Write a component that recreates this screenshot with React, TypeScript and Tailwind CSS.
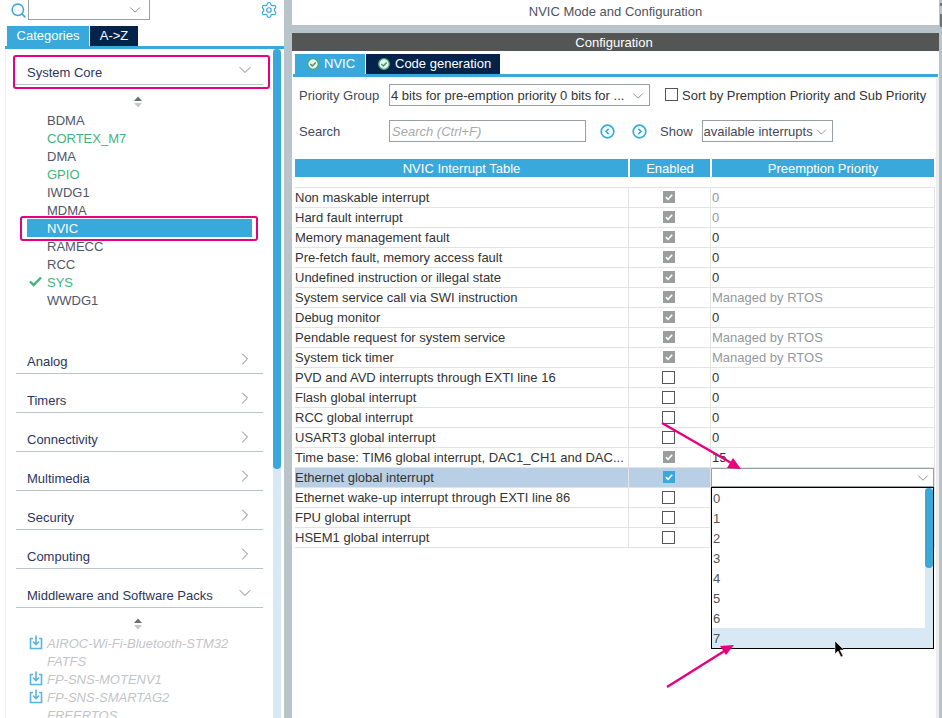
import { ChevronDown, ChevronRight, Search, Settings } from 'lucide-react';

type Box = 'on' | 'off' | 'active';

interface Row {
  name: string;
  box: Box;
  priority: string;
  muted?: boolean;
}

const coreItems = [
  { name: 'BDMA' },
  { name: 'CORTEX_M7', green: true },
  { name: 'DMA' },
  { name: 'GPIO', green: true },
  { name: 'IWDG1' },
  { name: 'MDMA' },
  { name: 'NVIC', selected: true },
  { name: 'RAMECC' },
  { name: 'RCC' },
  { name: 'SYS', green: true, check: true },
  { name: 'WWDG1' },
];

const closedSections = ['Analog', 'Timers', 'Connectivity', 'Multimedia', 'Security', 'Computing'];

const packs = [
  { name: 'AIROC-Wi-Fi-Bluetooth-STM32', icon: true },
  { name: 'FATFS' },
  { name: 'FP-SNS-MOTENV1', icon: true },
  { name: 'FP-SNS-SMARTAG2', icon: true },
  { name: 'FREERTOS' },
];

const rows: Row[] = [
  { name: 'Non maskable interrupt', box: 'on', priority: '0', muted: true },
  { name: 'Hard fault interrupt', box: 'on', priority: '0', muted: true },
  { name: 'Memory management fault', box: 'on', priority: '0' },
  { name: 'Pre-fetch fault, memory access fault', box: 'on', priority: '0' },
  { name: 'Undefined instruction or illegal state', box: 'on', priority: '0' },
  { name: 'System service call via SWI instruction', box: 'on', priority: 'Managed by RTOS', muted: true },
  { name: 'Debug monitor', box: 'on', priority: '0' },
  { name: 'Pendable request for system service', box: 'on', priority: 'Managed by RTOS', muted: true },
  { name: 'System tick timer', box: 'on', priority: 'Managed by RTOS', muted: true },
  { name: 'PVD and AVD interrupts through EXTI line 16', box: 'off', priority: '0' },
  { name: 'Flash global interrupt', box: 'off', priority: '0' },
  { name: 'RCC global interrupt', box: 'off', priority: '0' },
  { name: 'USART3 global interrupt', box: 'off', priority: '0' },
  { name: 'Time base: TIM6 global interrupt, DAC1_CH1 and DAC...', box: 'on', priority: '15' },
  { name: 'Ethernet global interrupt', box: 'active', priority: '' },
  { name: 'Ethernet wake-up interrupt through EXTI line 86', box: 'off', priority: '' },
  { name: 'FPU global interrupt', box: 'off', priority: '' },
  { name: 'HSEM1 global interrupt', box: 'off', priority: '' },
];

function SortHandle() {
  return (
    <svg width="10" height="12" viewBox="0 0 10 12">
      <path d="M5 0.5 L9 5 L1 5 Z" fill="#6b6f72" />
      <path d="M5 11.5 L9 7 L1 7 Z" fill="#c4c8cb" />
    </svg>
  );
}

function PackIcon() {
  return (
    <svg width="14" height="15" viewBox="0 0 14 15" fill="none" stroke="#55b5e4" strokeWidth="1.6">
      <path d="M4 3.5 H1.5 V13.5 H12.5 V3.5 H10" />
      <path d="M7 0.5 V9" />
      <path d="M4 6.5 L7 9.5 L10 6.5" />
    </svg>
  );
}

function TabCheck() {
  return (
    <svg width="12" height="12" viewBox="0 0 12 12">
      <circle cx="6" cy="6" r="5.3" fill="#e8f3ee" stroke="#3fae72" strokeWidth="1.3" />
      <path d="M3.4 6 L5.4 8 L8.7 4.4" fill="none" stroke="#5a8f76" strokeWidth="1.5" />
    </svg>
  );
}

function CircleArrow({ flip }: { flip?: boolean }) {
  return (
    <svg width="15" height="15" viewBox="0 0 15 15" fill="none" stroke="#39a9db">
      <circle cx="7.5" cy="7.5" r="6.3" strokeWidth="1.7" />
      <path d={flip ? 'M6.3 4.8 L9 7.5 L6.3 10.2' : 'M8.7 4.8 L6 7.5 L8.7 10.2'} strokeWidth="1.7" />
    </svg>
  );
}

function CheckBox({ box }: { box: Box }) {
  if (box === 'off') return <span className="block w-[13px] h-[13px] border border-[#555]" />;
  return (
    <span className={`flex items-center justify-center w-[12px] h-[12px] ${box === 'on' ? 'bg-[#9a9c9e]' : 'bg-[#39a9db]'}`}>
      <svg width="10" height="10" viewBox="0 0 10 10" fill="none" stroke="white" strokeWidth="1.6">
        <path d="M1.8 5.2 L4 7.3 L8.2 2.8" />
      </svg>
    </span>
  );
}

function SectionHead({ title, open }: { title: string; open?: boolean }) {
  return (
    <div className="flex items-end justify-between h-[39px] mx-[10px] border-b border-[#b8c3ca] pl-[11px] pr-[8px] pb-[3px] text-[#2c3560]">
      <span className="leading-[16px]">{title}</span>
      {open ? (
        <ChevronDown className="w-[20px] h-[20px] mb-[1px] text-[#777]" strokeWidth={1.1} />
      ) : (
        <ChevronRight className="w-[20px] h-[20px] mb-[1px] text-[#777]" strokeWidth={1.1} />
      )}
    </div>
  );
}

export default function App() {
  return (
    <div className="relative flex w-[942px] h-[718px] overflow-hidden bg-[#b8c3ca] font-['Liberation_Sans',Arial,sans-serif] text-[13px]">
      {/* left panel */}
      <aside className="flex flex-col w-[284px] h-full bg-white">
        <div className="flex items-start justify-between h-[26px] pl-[10px] pr-[6px]">
          <div className="flex items-start">
            <Search className="w-[17px] h-[17px] mt-[2px] text-[#39a9db]" strokeWidth={2.2} />
            <div className="flex items-center justify-end w-[122px] h-[21px] -mt-px ml-px border border-[#9a9fa3] pr-[5px]">
              <ChevronDown className="w-[18px] h-[18px] text-[#777]" strokeWidth={1.1} />
            </div>
          </div>
          <Settings className="w-[18px] h-[18px] mt-[1px] text-[#39a9db]" strokeWidth={1.6} />
        </div>
        <div className="flex h-[20px] pl-[7px] gap-px text-white">
          <div className="flex items-center justify-center w-[82px] bg-[#39a9db]">Categories</div>
          <div className="flex items-center justify-center w-[48px] bg-[#03234b]">A-&gt;Z</div>
        </div>
        <div className="ml-[5px] h-[3px] bg-[#39a9db]" />
        <div className="flex flex-1 min-h-0 ml-[5px] border-l border-[#eeeeee]">
          <div className="w-[267px] -mt-[3px]">
            <SectionHead title="System Core" open />
            <div className="flex justify-center h-[26px] pt-[11px] pr-[3px]">
              <SortHandle />
            </div>
            <ul className="text-[#50566a]">
              {coreItems.map((item) => (
                <li
                  key={item.name}
                  className={`relative flex items-center h-[18px] mx-[21px] pl-[20px] pt-[1px] ${item.green ? 'text-[#3fb47c]' : ''} ${item.selected ? 'bg-[#39a9db] text-white' : ''}`}
                >
                  {item.check && (
                    <svg className="absolute left-[2px] top-[3px]" width="13" height="11" viewBox="0 0 13 11" fill="none" stroke="#3fb47c" strokeWidth="2.4">
                      <path d="M1 5.5 L4.6 9 L12 1.5" />
                    </svg>
                  )}
                  {item.name}
                </li>
              ))}
            </ul>
            <div className="h-[26px]" />
            {closedSections.map((title) => (
              <SectionHead key={title} title={title} />
            ))}
            <SectionHead title="Middleware and Software Packs" open />
            <div className="flex justify-center h-[26px] pt-[10px] pr-[3px]">
              <SortHandle />
            </div>
            <ul className="italic text-[#c2c5c8]">
              {packs.map((p) => (
                <li key={p.name} className="relative flex items-center h-[18px] pl-[41px] pt-[1px] whitespace-nowrap">
                  {p.icon && (
                    <span className="absolute left-[23px] top-[1px]">
                      <PackIcon />
                    </span>
                  )}
                  {p.name}
                </li>
              ))}
            </ul>
          </div>
          <div className="w-[8px] h-full bg-[#d8e8f5]">
            <div className="w-[8px] h-[420px] rounded-full bg-[#39a9db]" />
          </div>
        </div>
      </aside>

      {/* right panel */}
      <main className="flex flex-col w-[647px] h-full ml-[8px] bg-white text-[#44485a]">
        <div className="flex items-center justify-center h-[25px] bg-white pb-[2px] text-[#50525f]">NVIC Mode and Configuration</div>
        <div className="h-[8px] bg-[#b8c3ca]" />
        <div className="flex items-center justify-center h-[18px] pt-[1px] pr-[3px] bg-[#545655] text-white">Configuration</div>
        <div className="flex h-[20px] mt-[3px] ml-[3px] gap-px text-white">
          <div className="flex items-center gap-[5px] w-[70px] pl-[12px] bg-[#39a9db]">
            <TabCheck />
            NVIC
          </div>
          <div className="flex items-center gap-[5px] w-[134px] pl-[12px] bg-[#03234b]">
            <TabCheck />
            Code generation
          </div>
        </div>
        <div className="ml-[1px] mr-px h-[3px] bg-[#39a9db]" />

        <div className="flex-1 min-h-0 border-r-[3px] border-[#eeeeee]">
          <div className="flex items-center h-[22px] mt-[7px] pl-[7px] pt-[1px]">
            <span className="w-[90px]">Priority Group</span>
            <div className="flex items-center justify-between w-[261px] h-[22px] -mt-[1px] border border-[#9a9fa3] pl-[1px] pr-[2px] pt-[1px] text-[#333]">
              <span className="whitespace-nowrap">4 bits for pre-emption priority 0 bits for ...</span>
              <ChevronDown className="w-[18px] h-[18px] text-[#777]" strokeWidth={1.1} />
            </div>
            <span className="w-[13px] h-[13px] ml-[15px] -mt-[2px] border border-[#555]" />
            <span className="ml-[4px] whitespace-nowrap text-[#333]">Sort by Premption Priority and Sub Priority</span>
          </div>
          <div className="flex items-center h-[22px] mt-[14px] pl-[7px] pt-[1px]">
            <span className="w-[90px]">Search</span>
            <div className="flex items-center w-[197px] h-[22px] -mt-[1px] border border-[#9a9fa3] pl-[2px] pt-[1px] italic text-[#aaa]">Search (Ctrl+F)</div>
            <span className="ml-[14px] -mt-[1px]">
              <CircleArrow />
            </span>
            <span className="ml-[17px] -mt-[1px]">
              <CircleArrow flip />
            </span>
            <span className="ml-[13px]">Show</span>
            <div className="flex items-center justify-between w-[131px] h-[22px] -mt-[1px] ml-[9px] border border-[#9a9fa3] pl-[1px] pr-[2px] pt-[1px]">
              <span className="whitespace-nowrap">available interrupts</span>
              <ChevronDown className="w-[18px] h-[18px] text-[#777]" strokeWidth={1.1} />
            </div>
          </div>

          <div className="flex h-[18px] mt-[17px] ml-[3px] gap-[2px] text-white">
            <div className="flex items-center justify-center w-[333px] pt-[1px] bg-[#39a9db]">NVIC Interrupt Table</div>
            <div className="flex items-center justify-center w-[80px] pt-[1px] bg-[#39a9db]">Enabled</div>
            <div className="flex items-center justify-center w-[222px] pt-[1px] bg-[#39a9db]">Preemption Priority</div>
          </div>

          <div className="mt-[10px] ml-[3px] w-[640px] border-b border-[#e3e3e3] text-[#333]">
            {rows.map((row) => (
              <div
                key={row.name}
                className={`flex h-[20px] border-t border-[#e3e3e3] ${row.box === 'active' ? 'bg-[#b8cfe6]' : ''}`}
              >
                <div className="flex items-center w-[333px] whitespace-nowrap">{row.name}</div>
                <div className="flex items-center justify-center w-[82px] border-l border-[#e3e3e3] pr-[2px] pb-[1px]">
                  <CheckBox box={row.box} />
                </div>
                <div className={`flex items-center flex-1 pl-[1px] border-x border-[#e3e3e3] ${row.muted ? 'text-[#94989c]' : ''}`}>
                  {row.box === 'active' ? (
                    <div className="flex items-center justify-end w-[223px] h-[19px] -ml-[1px] border border-[#9a9fa3] bg-white pr-[1px]">
                      <ChevronDown className="w-[18px] h-[18px] text-[#777]" strokeWidth={1.1} />
                    </div>
                  ) : (
                    row.priority
                  )}
                </div>
              </div>
            ))}
          </div>
        </div>
      </main>

      {/* sash grip on the far right */}
      <div className="flex flex-col items-end w-[3px] pt-[3px]">
        <div className="w-[2px] h-[3px] bg-[#6d7478]" />
        <div className="w-[2px] h-[13px] mt-[8px] bg-[#6d7478]" />
      </div>

      {/* open priority dropdown */}
      <div className="absolute left-[711px] top-[487px] flex w-[223px] h-[162px] border border-black bg-white text-[#555]">
        <div className="flex-1 pl-[1px]">
          {['0', '1', '2', '3', '4', '5', '6'].map((n) => (
            <div key={n} className="flex items-center h-[20px] pt-[1px]">{n}</div>
          ))}
        </div>
        <div className="w-[8px] h-[140px] bg-[#d8e8f5]">
          <div className="w-[8px] h-[80px] rounded-full bg-[#39a9db]" />
        </div>
        <div className="absolute left-0 right-0 bottom-0 flex items-center h-[20px] pl-[1px] pt-[1px] bg-[#d8e8f5]">7</div>
      </div>

      {/* annotations */}
      <div className="absolute left-[13px] top-[55px] w-[257px] h-[34px] rounded-[3px] border-2 border-[#e6007e]" />
      <div className="absolute left-[20px] top-[216px] w-[238px] h-[25px] rounded-[3px] border-2 border-[#e6007e]" />
      <svg className="absolute left-0 top-0 pointer-events-none" width="942" height="718">
        <path d="M662 423 L733 464" stroke="#e6007e" strokeWidth="2.4" />
        <path d="M741 469 L727 468 L733 458 Z" fill="#e6007e" />
        <path d="M667 687 L726 650" stroke="#e6007e" strokeWidth="2.4" />
        <path d="M734 645 L726 655 L720 646 Z" fill="#e6007e" />
        <path d="M835 641 L835 654 L838 651 L841 657 L843 656 L840 650 L844 650 Z" fill="black" stroke="white" strokeWidth="0.5" />
      </svg>
    </div>
  );
}
